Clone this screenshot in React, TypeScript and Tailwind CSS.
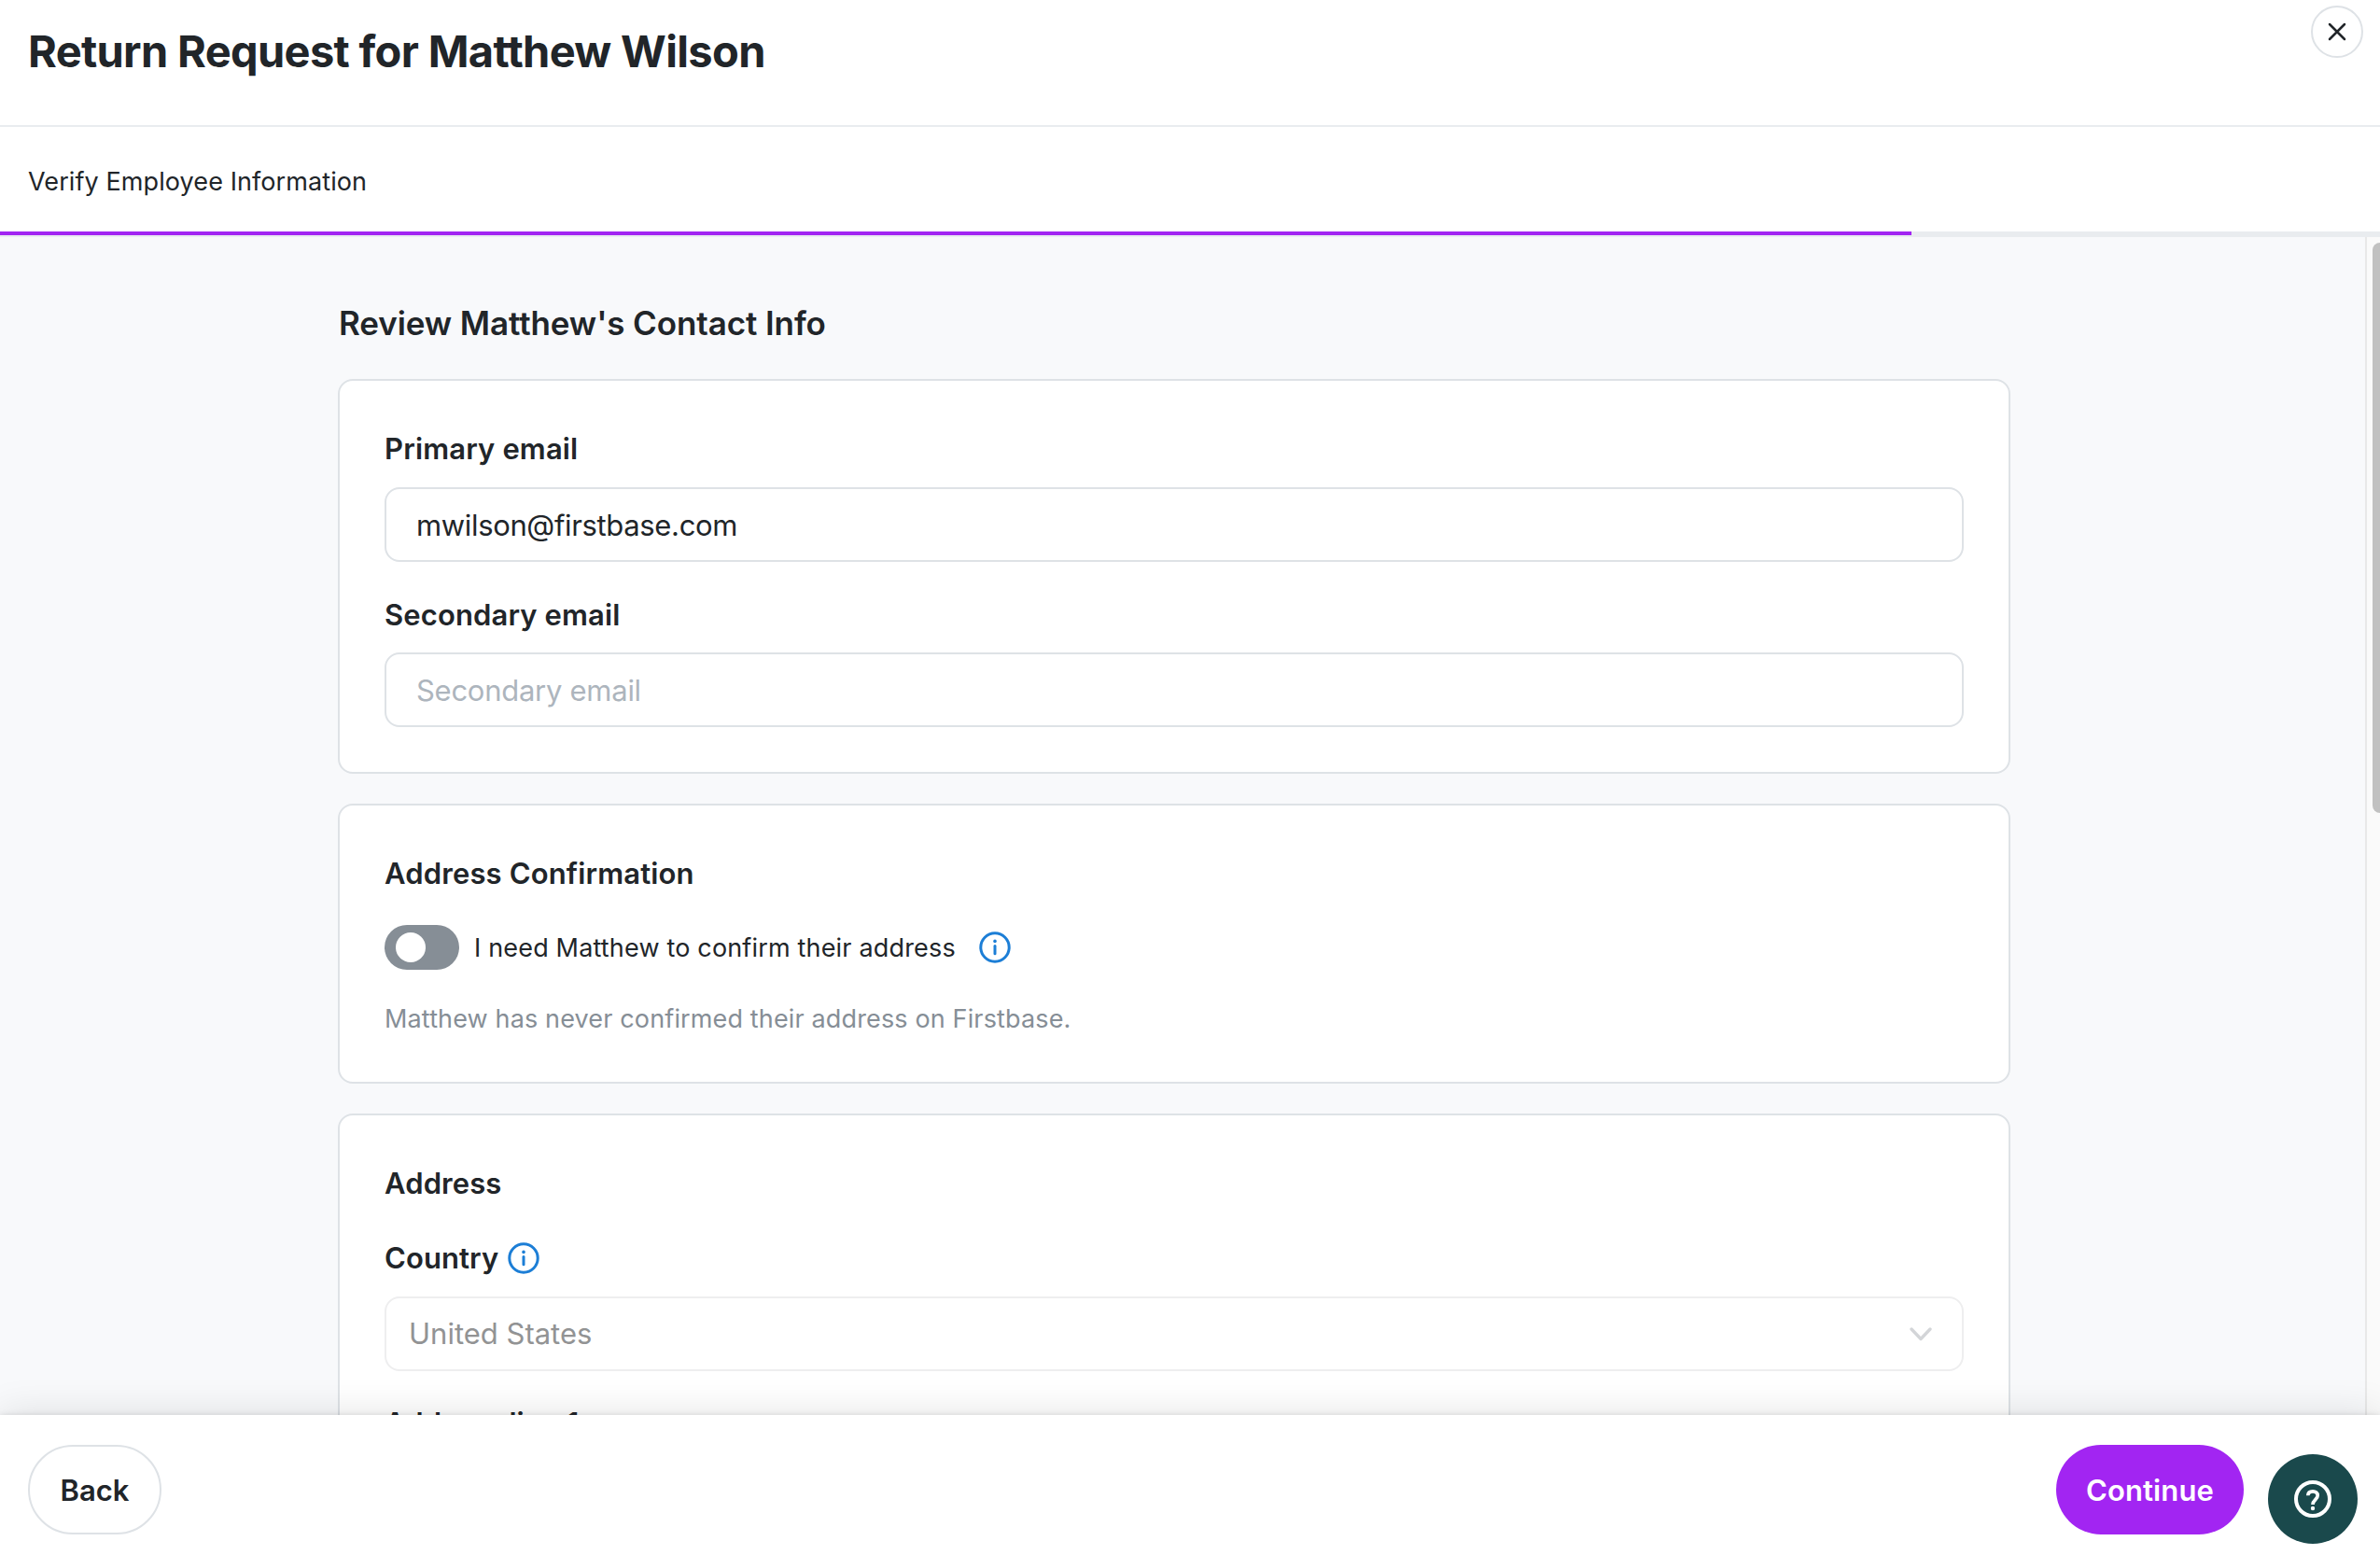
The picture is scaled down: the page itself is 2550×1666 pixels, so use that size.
import type { ReactNode } from 'react';

function InfoIcon() {
  return (
    <svg viewBox="0 0 34 34" className="size-[34px] shrink-0" fill="none">
      <circle cx="17" cy="17" r="15.2" stroke="#1c7ed6" strokeWidth="3" />
      <circle cx="17" cy="10.4" r="1.8" fill="#1c7ed6" />
      <path d="M17 15.4v8.4" stroke="#1c7ed6" strokeWidth="3" strokeLinecap="round" />
    </svg>
  );
}

function Card({ children }: { children: ReactNode }) {
  return (
    <section className="rounded-2xl border-2 border-[#dee2e6] bg-white px-12 pb-12">{children}</section>
  );
}

export default function App() {
  return (
    <div className="flex h-[1666px] w-[2550px] flex-col overflow-hidden bg-white font-[Inter,sans-serif] text-[#212529]">
      <header className="flex h-[136px] shrink-0 items-start justify-between border-b-2 border-[#e9ecef] pl-[30px] pr-[18px]">
        <h1 className="pt-[27px] text-[47px] leading-[56px] font-bold tracking-[-0.66px]">
          Return Request for Matthew Wilson
        </h1>
        <button
          type="button"
          className="mt-1.5 flex size-14 items-center justify-center rounded-full border-2 border-[#dee2e6]"
        >
          <svg viewBox="0 0 20 20" className="size-5" fill="none">
            <path d="M2 2l16 16M18 2L2 18" stroke="#212529" strokeWidth="2.5" strokeLinecap="round" />
          </svg>
        </button>
      </header>

      <div className="flex h-[112px] shrink-0 items-center px-[30px] pt-1.5 text-[27px] leading-10 tracking-[0.09px]">
        Verify Employee Information
      </div>
      <div className="h-1.5 shrink-0 bg-[#e9ecef]">
        <div className="h-1 w-[2048px] bg-[#a225f2]" />
      </div>

      <div className="flex min-h-0 flex-1">
        <main className="flex-1 overflow-hidden bg-[#f8f9fb]">
          <div className="ml-[362px] flex w-[1792px] flex-col">
            <h2 className="mt-[67px] pl-px text-[35px] leading-[50px] font-semibold tracking-[-0.1px]">
              Review Matthew's Contact Info
            </h2>
            <div className="mt-[35px] flex flex-col gap-8">
              <Card>
                <label className="mt-[50px] block text-[31px] leading-[46px] font-semibold tracking-[0.14px]">
                  Primary email
                </label>
                <div className="mt-[18px] flex h-20 items-center rounded-2xl border-2 border-[#dee2e6] px-8 pt-0.5 text-[31px] tracking-[-0.35px]">
                  mwilson@firstbase.com
                </div>
                <label className="mt-[34px] block text-[31px] leading-[46px] font-semibold tracking-[0.12px]">
                  Secondary email
                </label>
                <div className="mt-[17px] flex h-20 items-center rounded-2xl border-2 border-[#dee2e6] px-8 pt-0.5 text-[31px] tracking-[-0.27px] text-[#adb5bd]">
                  Secondary email
                </div>
              </Card>

              <Card>
                <h3 className="mt-[50px] text-[31px] leading-[46px] font-semibold tracking-[0.14px]">
                  Address Confirmation
                </h3>
                <div className="mt-8 flex h-12 items-center">
                  <div className="flex h-12 w-20 items-center rounded-3xl bg-[#868e96] px-3">
                    <div className="size-8 rounded-full bg-white" />
                  </div>
                  <span className="mr-[25px] ml-4 pt-0.5 text-[27px] tracking-[0.17px]">
                    I need Matthew to confirm their address
                  </span>
                  <InfoIcon />
                </div>
                <p className="mt-[33px] -mb-px text-[27px] leading-10 tracking-[0.14px] text-[#868e96]">
                  Matthew has never confirmed their address on Firstbase.
                </p>
              </Card>

              <Card>
                <h3 className="mt-[50px] text-[31px] leading-[46px] font-semibold tracking-[0.1px]">Address</h3>
                <div className="mt-[34px] flex items-center gap-2.5 text-[31px] leading-[46px] font-semibold tracking-[0.1px]">
                  Country
                  <InfoIcon />
                </div>
                <div className="mt-[18px] flex h-20 items-center justify-between rounded-2xl border-2 border-[#eeeeef] pr-8 pl-6 text-[31px] text-[#929394]">
                  United States
                  <svg viewBox="0 0 24 24" className="size-6" fill="none">
                    <path d="M2 7l10 10.5L22 7" stroke="#d3d5d8" strokeWidth="3.3" strokeLinecap="round" strokeLinejoin="round" />
                  </svg>
                </div>
                <label className="mt-[33px] block text-[31px] leading-[46px] font-semibold tracking-[0.1px]">
                  Address line 1
                </label>
              </Card>
            </div>
          </div>
        </main>
        <div className="w-4 shrink-0 overflow-hidden border-l-2 border-[#e8e8e8] bg-[#fafafa] pt-1.5 pl-1.5">
          <div className="h-[611px] w-4 rounded-full bg-[#c1c1c1]" />
        </div>
      </div>

      <footer className="relative flex h-[150px] shrink-0 items-start bg-white pt-8 pr-6 pl-[30px] text-[31px] font-semibold shadow-[0_0_6px_rgba(0,0,0,0.12),0_0_40px_rgba(0,0,0,0.12)]">
        <button type="button" className="h-24 w-[143px] rounded-full border-2 border-[#dee2e6] pt-0.5">
          Back
        </button>
        <button type="button" className="ml-auto h-24 w-[201px] rounded-full bg-[#a225f2] pt-0.5 tracking-[0.1px] text-white">
          Continue
        </button>
        <button
          type="button"
          className="mt-2.5 ml-[26px] flex size-24 items-center justify-center rounded-full bg-[#1a494c]"
        >
          <svg viewBox="0 0 40 40" className="size-10" fill="none" stroke="#fff">
            <circle cx="20" cy="20" r="18" strokeWidth="4" />
            <path d="M14.8 16.2c.1-2.9 2.2-4.4 5.2-4.4s5.2 1.7 5.2 4.5c0 4.300-5.200 4.300-5.200 9.700" strokeWidth="3.7" />
            <circle cx="20" cy="30" r="2.2" fill="#fff" stroke="none" />
          </svg>
        </button>
      </footer>
    </div>
  );
}
